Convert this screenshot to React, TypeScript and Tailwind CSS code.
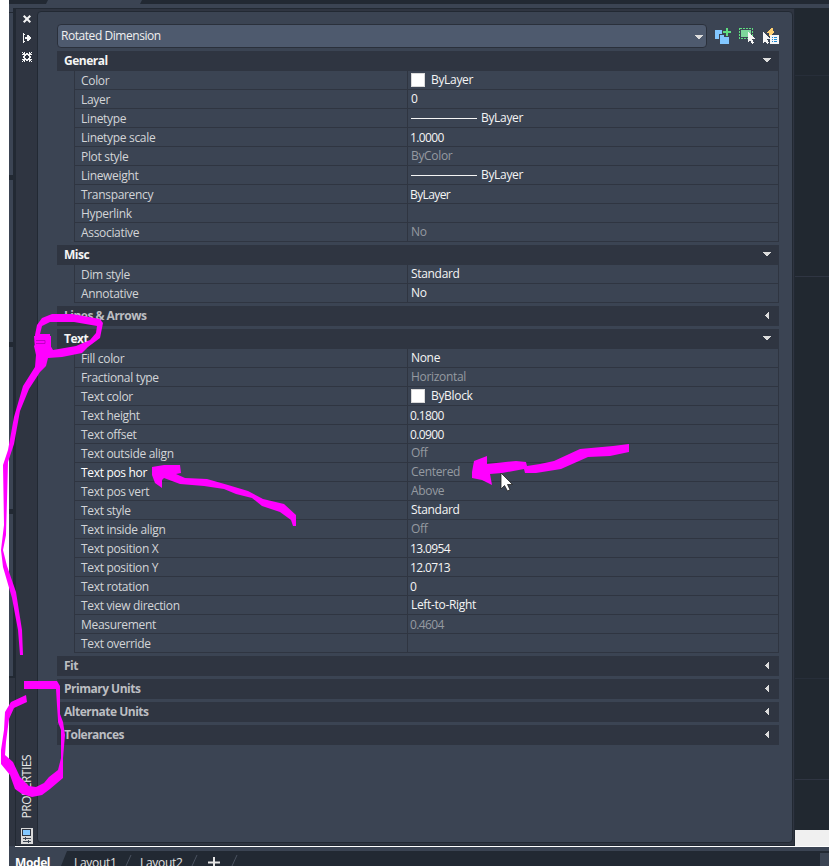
import React from 'react'

type Row = {
    label: string
    value?: string
    kind?: 'swatch' | 'line' | 'number'
    muted?: boolean
    active?: boolean
}

type Section = { title: string; rows?: Row[] }

const sections: Section[] = [
    {
        title: 'General',
        rows: [
            { label: 'Color', value: 'ByLayer', kind: 'swatch' },
            { label: 'Layer', value: '0' },
            { label: 'Linetype', value: 'ByLayer', kind: 'line' },
            { label: 'Linetype scale', value: '1.0000', kind: 'number' },
            { label: 'Plot style', value: 'ByColor', muted: true },
            { label: 'Lineweight', value: 'ByLayer', kind: 'line' },
            { label: 'Transparency', value: 'ByLayer', kind: 'number' },
            { label: 'Hyperlink' },
            { label: 'Associative', value: 'No', muted: true },
        ],
    },
    {
        title: 'Misc',
        rows: [
            { label: 'Dim style', value: 'Standard' },
            { label: 'Annotative', value: 'No' },
        ],
    },
    { title: 'Lines & Arrows' },
    {
        title: 'Text',
        rows: [
            { label: 'Fill color', value: 'None' },
            { label: 'Fractional type', value: 'Horizontal', muted: true },
            { label: 'Text color', value: 'ByBlock', kind: 'swatch' },
            { label: 'Text height', value: '0.1800', kind: 'number' },
            { label: 'Text offset', value: '0.0900', kind: 'number' },
            { label: 'Text outside align', value: 'Off', muted: true },
            { label: 'Text pos hor', value: 'Centered', muted: true, active: true },
            { label: 'Text pos vert', value: 'Above', muted: true },
            { label: 'Text style', value: 'Standard' },
            { label: 'Text inside align', value: 'Off', muted: true },
            { label: 'Text position X', value: '13.0954', kind: 'number' },
            { label: 'Text position Y', value: '12.0713', kind: 'number' },
            { label: 'Text rotation', value: '0', kind: 'number' },
            { label: 'Text view direction', value: 'Left-to-Right' },
            { label: 'Measurement', value: '0.4604', kind: 'number', muted: true },
            { label: 'Text override' },
        ],
    },
    { title: 'Fit' },
    { title: 'Primary Units' },
    { title: 'Alternate Units' },
    { title: 'Tolerances' },
]

const ArrowDown = () => (
    <svg width="8" height="4" viewBox="0 0 8 4" shapeRendering="crispEdges" fill="#dcdcdc">
        <path d="M0 0h8v1H0zM1 1h6v1H1zM2 2h4v1H2zM3 3h2v1H3z" />
    </svg>
)

const ArrowLeft = () => (
    <svg width="4" height="7" viewBox="0 0 4 7" shapeRendering="crispEdges" fill="#dcdcdc">
        <path d="M3 0h1v7H3zM2 1h1v5H2zM1 2h1v3H1zM0 3h1v1H0z" />
    </svg>
)

const PropertyRow = ({ row }: { row: Row }) => (
    <div className="flex h-[19px] border-b border-[#2f3541]">
        <div className={`flex w-[333px] items-center border-r border-[#2f3541] pl-[6px] pt-px ${row.active ? 'text-white' : 'text-[#d3d5d8]'}`}>
            {row.label}
        </div>
        <div className={`flex flex-1 items-center ${row.kind === 'number' ? 'pl-[2px] pt-[2px] tracking-[-0.6px]' : 'pl-[3px]'} ${row.muted ? 'text-[#959aa1]' : 'text-[#f5f5f5]'}`}>
            {row.kind === 'swatch' && <span className="mr-[6px] h-[14px] w-[14px] border border-[#d9d9d9] bg-white" />}
            {row.kind === 'line' && <span className="mr-[4px] h-px w-[66px] bg-[#f5f5f5]" />}
            {row.value}
        </div>
    </div>
)

const PropertySection = ({ section }: { section: Section }) => (
    <div className="mb-[3px]">
        <div className={`flex h-5 items-center justify-between bg-[#2f3541] pl-[7px] font-bold tracking-[-0.5px] ${section.rows ? 'pr-2 text-[#f5f5f5]' : 'pr-[10px] text-[#bcbec2]'}`}>
            <span>{section.title}</span>
            {section.rows ? <span className="pb-[2px]"><ArrowDown /></span> : <span className="pb-px"><ArrowLeft /></span>}
        </div>
        {section.rows && (
            <div className="ml-[17px] border-x border-[#2f3541]">
                {section.rows.map((row) => <PropertyRow key={row.label} row={row} />)}
            </div>
        )}
    </div>
)

const ToolIcons = () => (
    <svg width="66" height="18" viewBox="714 27 66 18" shapeRendering="crispEdges">
        {/* toggle PICKADD */}
        <path d="M715 30h7v4h-3v5h-4z" fill="#82c7ff" />
        <path d="M720 35h4v2h5v7h-9z" fill="#82c7ff" />
        <path d="M726 28h2v3h3v2h-3v3h-2v-3h-3v-2h3z" fill="#5fdd80" />
        {/* select objects */}
        <rect x="739.5" y="28.5" width="13" height="10" fill="none" stroke="#5fdd80" strokeDasharray="2 1" />
        <path d="M741 30h10v7h-10z" fill="#7ed69b" />
        <path d="M748 31v11l2-2 2 4 2-1-2-4h3z" fill="#f5f5f5" />
        {/* quick select */}
        <path d="M763 32v11l2-2 2 3 2-1-2-4h3z" fill="#f5f5f5" />
        <path d="M771 28h2v3h1v2h-1l-2 3h-2v-3h-2v-1z" fill="#ffcf70" />
        <path d="M770 35h9v9h-9z" fill="#f5f5f5" />
        <path d="M772 37h1v1h-1zM774 37h3v1h-3zM772 39h1v1h-1zM774 39h3v1h-3zM772 41h1v1h-1zM774 41h3v1h-3z" fill="#1e88d0" />
    </svg>
)

const TitleBar = () => (
    <div className="flex w-[21px] flex-col items-center pl-px">
        <svg width="12" height="50" viewBox="21 14 12 50" className="mt-[5px]" fill="#f5f5f5">
            <path d="M23.700 15.700l6.600 6.600M30.300 15.700l-6.600 6.600" stroke="#f5f5f5" strokeWidth="2" />
            <path d="M23 33h1v10h-1zM24 34h1v1h-1zM24 41h1v1h-1zM25 37h6v2h-6zM27 35h1v6h-1zM28 35h1v6h-1zM29 36h1v4h-1z" shapeRendering="crispEdges" />
            <g shapeRendering="crispEdges">
                <path d="M24 54h6v1h-6zM24 59h6v1h-6zM24 54h1v6h-1zM29 54h1v6h-1z" />
                <path d="M24 52h1v2h-1zM29 52h1v2h-1zM24 60h1v2h-1zM29 60h1v2h-1zM26 53h2v1h-2zM26 60h2v1h-2z" />
                <path d="M22 54h2v1h-2zM30 54h2v1h-2zM22 59h2v1h-2zM30 59h2v1h-2zM23 56h1v2h-1zM30 56h1v2h-1z" />
                <path d="M22 52h1v1h-1zM31 52h1v1h-1zM22 61h1v1h-1zM31 61h1v1h-1zM23 53h1v1h-1zM30 53h1v1h-1zM23 60h1v1h-1zM30 60h1v1h-1zM25 55h1v1h-1zM28 55h1v1h-1zM25 58h1v1h-1zM28 58h1v1h-1z" />
            </g>
        </svg>
        <div className="flex-1" />
        <span className="rotate-180 text-[12px] leading-[14px] tracking-[-0.5px] text-[#e8e8e8] [writing-mode:vertical-rl]">PROPERTIES</span>
        <svg width="12" height="16" viewBox="0 0 12 16" className="mt-[10px] mb-px" shapeRendering="crispEdges">
            <path d="M0 0h12v16H0z" fill="#d9d9d9" />
            <path d="M1 1h9v7H1z" fill="#2f3541" />
            <path d="M2 2h7v5H2z" fill="#82c7ff" />
            <path d="M2 10h8v1H2zM2 13h8v1H2zM4 9h1v3H4zM7 12h1v3H7z" fill="#3c4452" />
        </svg>
    </div>
)

const LayoutTabs = () => (
    <div className="relative h-5 overflow-hidden bg-[#3b4453]">
        <div className="ml-[6px] h-px bg-white" />
        <svg width="820" height="15" viewBox="9 851 820 15" className="absolute left-0 top-[5px]">
            <path d="M67 851h762v15H61z" fill="#222933" />
            <path d="M820 853h9v13h-9z" fill="#3b4453" />
            <path d="M126 866l5-11M192 866l5-11M232 866l5-11" stroke="#4a5260" fill="none" />
            <path d="M208 862.500h12M214 857v12" stroke="#e6e6e6" strokeWidth="2" />
        </svg>
        <div className="absolute left-[6px] top-[9px] flex text-[12px] leading-4 text-[#e0e0e0]">
            <span className="w-[59px] font-bold tracking-[-0.4px] text-white">Model</span>
            <span className="w-[66px] tracking-[-0.3px]">Layout1</span>
            <span className="tracking-[-0.3px]">Layout2</span>
        </div>
    </div>
)

// hand drawn marker strokes lying over the whole window
const Markup = () => (
    <svg width="829" height="866" viewBox="0 0 829 866" className="pointer-events-none absolute inset-0" fill="#ff00ff">
        <path d="M35 335L37 325L42 318L52 314L72 314L100 319L103 323L100 338L88 347L82 353L62 357L48 358L46 366L40 372L29 389L20 411L14 444L8 462L7 500L6 535L3 550L7 566L16 592L22 630L23 655L20 655L18 630L12 598L3 567L1 550L4 525L3 465L8 450L14 417L23 386L35 367L36 355L34 346L36 344ZM40 334L50 334L50 345L53 350L76 346L90 340L96 333L97 326L74 322L50 322L42 326Z" fillRule="evenodd" />
        <path d="M34 336h17v13H35z" />
        <path d="M36 340.500h9v3h-9" stroke="#b000b8" strokeWidth="0.8" fill="none" />
        <path d="M24 681L57 681L60 686L60 714L63 722L65 735L63 758L63 778L50 789L42 795L32 797L22 794L15 789L10 775L1 764L1 750L4 730L5 712L11 702L26 695L27 702L14 708L9 719L6 742L5 755L13 762L20 777L29 786L36 787L44 783L49 777L58 770L61 758L61 730L58 722L56 689L24 689Z" />
        <path d="M152 467L164 465L180 465L181 473L176 474L185 478L207 479L228 485L248 491L263 499L284 504L296 515L296 526L293 526L291 520L280 512L262 506L252 498L236 494L224 489L204 486L180 484L164 478L162 480L162 488L155 483L152 475Z" />
        <path d="M472 472L474 461L487 456L487 464L516 461L526 462L527 466L540 464L554 461L580 449L613 446L629 444L629 452L610 456L588 457L561 469L536 473L525 473L524 469L502 473L490 474L492 485L482 480L472 478Z" />
        {/* mouse pointer */}
        <path d="M501 473v16l3.500-3.500 3 5.500 2.500-1.300-2.500-5.200h5z" fill="#fff" stroke="#222" strokeWidth="0.8" />
    </svg>
)

const App: React.FC = () => {
    return (
        <div className="relative h-[866px] w-[829px] overflow-hidden bg-white pl-[9px] font-['Open_Sans',sans-serif] text-[12px] leading-4 tracking-[-0.32px]">
            <div className="h-2 border-b-4 border-[#3b4453] bg-[#222933]">
                <svg width="100" height="4" viewBox="0 0 100 4" className="ml-[37px]"><path d="M2 0h94l-2 4H0z" fill="#3b4453" /></svg>
            </div>

            <div className="flex h-[838px]">
                {/* docked window edge */}
                <div className="flex w-[6px] flex-col bg-[#222933] pr-[2px]">
                    <div className="h-1 bg-[#3b4453]" />
                    <div className="mt-px h-[162px] bg-[#3b4453]" />
                    <div className="mt-[5px] h-[162px] bg-[#3b4453]" />
                    <div className="mt-[5px] h-[162px] bg-[#3b4453]" />
                    <div className="mt-[5px] h-[162px] bg-[#3b4453]" />
                    <div className="-mr-[2px] mt-[2px] flex-1 bg-[#2f3541]" />
                </div>

                <div className="flex w-[780px] border border-[#222933] bg-[#2f3541]">
                    <TitleBar />
                    <div className="mb-[2px] mt-[2px] w-[756px] rounded border border-[#222933] bg-[#3b4453] pl-[19px] pt-[12px]">
                        <div className="mb-[3px] flex items-start">
                            <div className="flex h-6 w-[650px] items-center justify-between rounded-sm border border-[#2a303b] bg-[#4e5a6e] pl-[3px] pr-[3px] tracking-[-0.45px] text-[#f0f0f0]">
                                <span>Rotated Dimension</span>
                                <span className="pt-[2px]"><ArrowDown /></span>
                            </div>
                            <div className="ml-[7px] mt-[3px]"><ToolIcons /></div>
                        </div>
                        <div className="w-[722px]">
                            {sections.map((s) => <PropertySection key={s.title} section={s} />)}
                        </div>
                    </div>
                </div>

                {/* drawing area showing past the palette */}
                <div className="flex flex-1 flex-col bg-[#212830]">
                    <div className="h-[68px] border-b border-[#272e39]" />
                    <div className="h-[201px] border-b border-[#2f3542]" />
                    <div className="h-[402px] border-b border-[#272e39]" />
                    <div className="h-[101px] border-b border-[#2f3542]" />
                    <div className="flex-1" />
                    <div className="h-4 bg-[#f0f0f0]" />
                </div>
            </div>

            <LayoutTabs />
            <Markup />
        </div>
    )
}

export default App
